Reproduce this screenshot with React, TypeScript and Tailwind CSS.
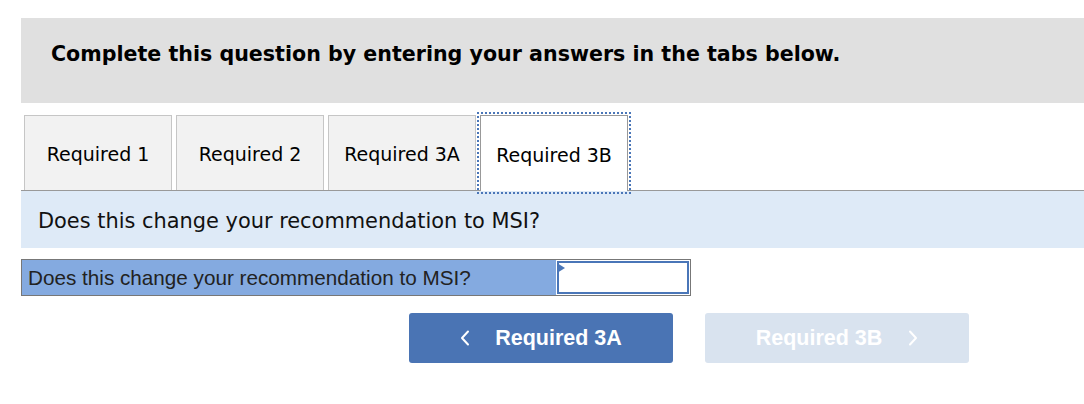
import React from "react";

const tabs = ["Required 1", "Required 2", "Required 3A"];

function Chevron({ dir }: { dir: "left" | "right" }) {
  return (
    <svg width="10" height="16" viewBox="0 0 10 16" fill="none">
      <polyline
        points={dir === "left" ? "8,1.5 2,8 8,14.5" : "2,1.5 8,8 2,14.5"}
        stroke="white"
        strokeWidth="2"
        strokeLinecap="round"
        strokeLinejoin="round"
      />
    </svg>
  );
}

export default function App() {
  return (
    <div className="w-[1084px] h-[404px] bg-white pt-[18px] pl-[21px] overflow-hidden">
      <div className="h-[85px] bg-[#e0e0e0] flex items-center pl-[30px] pb-[12px]">
        <h2 className="font-['DejaVu_Sans',Verdana,sans-serif] font-bold text-[20.6px] leading-none text-black">
          Complete this question by entering your answers in the tabs below.
        </h2>
      </div>

      <div className="mt-[12px] flex items-end pl-[3px] border-b border-[#999999] h-[76px]">
        <div className="flex gap-[4px] h-[75px]">
          {tabs.map((t) => (
            <div
              key={t}
              className="w-[148px] h-[75px] pt-[3px] bg-[#f2f2f2] border border-b-0 border-[#c6c6c6] flex items-center justify-center font-['DejaVu_Sans',Verdana,sans-serif] text-[19px] text-black"
            >
              {t}
            </div>
          ))}
          <div className="relative w-[148px] h-[76px] -mb-px pt-[3px] bg-white border border-b-0 border-[#999999] flex items-center justify-center font-['DejaVu_Sans',Verdana,sans-serif] text-[19px] text-black outline-dotted outline-2 outline-[#4a76b8] outline-offset-[1px]">
            Required 3B
          </div>
        </div>
      </div>

      <div className="h-[57px] bg-[#deeaf7] flex items-center pl-[17px] pt-[3px]">
        <p className="font-['DejaVu_Sans',Verdana,sans-serif] text-[20.9px] leading-none text-[#111]">
          Does this change your recommendation to MSI?
        </p>
      </div>

      <div className="mt-[11px] flex h-[37px] w-[670px] border border-[#777777]">
        <div className="w-[534px] bg-[#84aae0] flex items-center pl-[6px] font-['Liberation_Sans',Arial,sans-serif] text-[20.7px] text-[#222]">
          Does this change your recommendation to MSI?
        </div>
        <div className="relative flex-1 bg-white p-[1px] pr-[1px]">
          <div className="w-full h-full border-2 border-[#4a76b8]"></div>
          <div className="absolute left-[1px] top-[3px] w-0 h-0 border-t-[5px] border-b-[5px] border-l-[8px] border-t-transparent border-b-transparent border-l-[#4a76b8]"></div>
        </div>
      </div>

      <div className="mt-[17px] flex gap-[32px] pl-[388px]">
        <button className="w-[264px] h-[50px] rounded-[3px] bg-[#4a74b4] flex items-center justify-center gap-[25px] font-['Liberation_Sans',Arial,sans-serif] font-bold text-[21.5px] text-white">
          <Chevron dir="left" />
          <span>Required 3A</span>
        </button>
        <button className="w-[264px] h-[50px] rounded-[3px] bg-[#d9e3ef] flex items-center justify-center gap-[26px] font-['Liberation_Sans',Arial,sans-serif] font-bold text-[21.5px] text-white">
          <span>Required 3B</span>
          <Chevron dir="right" />
        </button>
      </div>
    </div>
  );
}
